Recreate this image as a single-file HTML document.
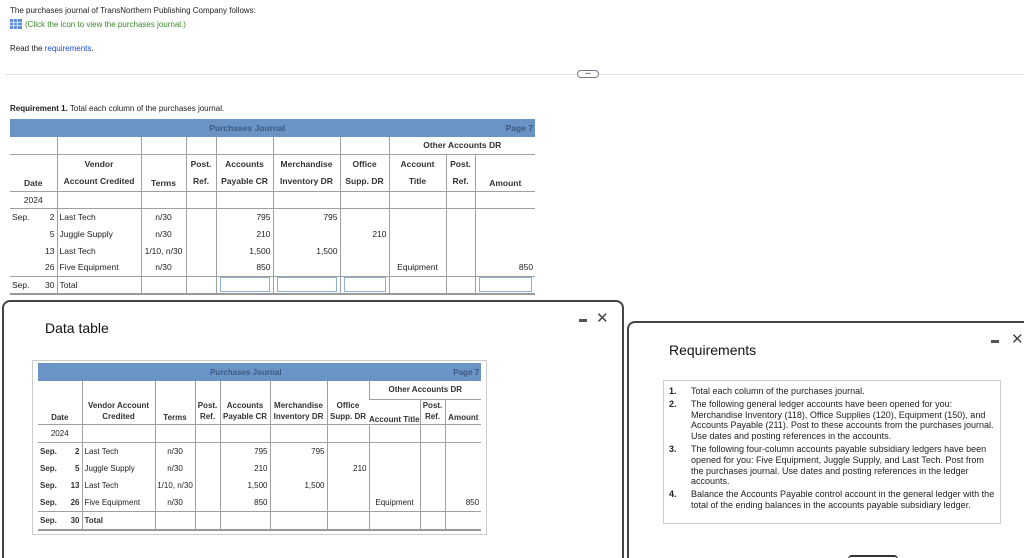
<!DOCTYPE html>
<html style="overflow:hidden;height:558px"><head><meta charset="utf-8"><style>
body{margin:0;width:1024px;height:558px;overflow:hidden;background:#fff;font-family:"Liberation Sans",Arial,sans-serif;color:#222;position:relative}
.a{position:absolute}
table{border-collapse:collapse;table-layout:fixed;font-size:8.5px}
td{padding:0 2px;white-space:nowrap;overflow:hidden;border-left:1px solid #a0a0a0;vertical-align:middle}
td:first-child{border-left:none}
.hd td{background:#6a93c6;color:#3d5a80;font-weight:bold;border:none}
.b{font-weight:bold;color:#333}
.c{text-align:center}.r{text-align:right}
.bt td{border-top:1px solid #a0a0a0}
.inp{display:block;height:13px;border:1px solid #8fb0d0;background:#fff;margin:0 1px}
.modal{position:absolute;border:2px solid #444;border-bottom:none;border-radius:8px 8px 0 0;background:#fff}
</style></head><body>
<div class="a" style="left:10px;top:6px;font-size:8px">The purchases journal of TransNorthern Publishing Company follows:</div>
<div class="a" style="left:10px;top:19px;font-size:8px;color:#3a8a2a"><span style="display:inline-block;width:12px;height:10px;background:#5b8ed6;vertical-align:-2px;margin-right:3px;background-image:linear-gradient(90deg,transparent 3px,#cfe0f5 3px,#cfe0f5 4px,transparent 4px,transparent 7px,#cfe0f5 7px,#cfe0f5 8px,transparent 8px),linear-gradient(transparent 3px,#cfe0f5 3px,#cfe0f5 4px,transparent 4px,transparent 6px,#cfe0f5 6px,#cfe0f5 7px,transparent 7px)"></span>(Click the icon to view the purchases journal.)</div>
<div class="a" style="left:10px;top:44px;font-size:8px">Read the <span style="color:#1a4fd6">requirements</span>.</div>
<div class="a" style="left:5px;top:74px;width:1019px;height:1px;background:#e2e2e2"></div>
<div class="a" style="left:577px;top:70px;width:20px;height:6px;border:1px solid #778;border-radius:4px;background:#fff;font-size:5px;line-height:6px;text-align:center;color:#556">▪▪▪</div>
<div class="a" style="left:10px;top:104px;font-size:8px"><b>Requirement 1.</b> Total each column of the purchases journal.</div>

<table class="a" style="left:10px;top:119px;width:525px;border-bottom:2px solid #999">
<colgroup><col style="width:47px"><col style="width:84px"><col style="width:45px"><col style="width:30px"><col style="width:57px"><col style="width:67px"><col style="width:49px"><col style="width:57px"><col style="width:29px"><col style="width:60px"></colgroup>
<tr class="hd" style="height:18px"><td colspan="5" class="r" style="padding-right:0">Purchases Jour</td><td colspan="5" style="padding-left:0"><span>nal</span><span style="float:right">Page 7</span></td></tr>
<tr style="height:17px"><td></td><td></td><td></td><td></td><td></td><td></td><td></td><td colspan="3" class="c b">Other Accounts DR</td></tr>
<tr class="bt" style="height:37px"><td class="c b" style="vertical-align:bottom;padding-bottom:3px">Date</td><td class="c b" style="line-height:17px">Vendor<br>Account Credited</td><td class="c b" style="vertical-align:bottom;padding-bottom:3px">Terms</td><td class="c b" style="line-height:17px">Post.<br>Ref.</td><td class="c b" style="line-height:17px">Accounts<br>Payable CR</td><td class="c b" style="line-height:17px">Merchandise<br>Inventory DR</td><td class="c b" style="line-height:17px">Office<br>Supp. DR</td><td class="c b" style="line-height:17px">Account<br>Title</td><td class="c b" style="line-height:17px">Post.<br>Ref.</td><td class="c b" style="vertical-align:bottom;padding-bottom:3px">Amount</td></tr>
<tr class="bt" style="height:17px"><td class="c">2024</td><td></td><td></td><td></td><td></td><td></td><td></td><td></td><td></td><td></td></tr>
<tr class="bt" style="height:17px"><td>Sep.<span style="float:right">2</span></td><td>Last Tech</td><td class="c">n/30</td><td></td><td class="r">795</td><td class="r">795</td><td></td><td></td><td></td><td></td></tr>
<tr style="height:17px"><td class="r">5</td><td>Juggle Supply</td><td class="c">n/30</td><td></td><td class="r">210</td><td></td><td class="r">210</td><td></td><td></td><td></td></tr>
<tr style="height:17px"><td class="r">13</td><td>Last Tech</td><td class="c">1/10, n/30</td><td></td><td class="r">1,500</td><td class="r">1,500</td><td></td><td></td><td></td><td></td></tr>
<tr style="height:17px"><td class="r">26</td><td>Five Equipment</td><td class="c">n/30</td><td></td><td class="r">850</td><td></td><td></td><td class="c">Equipment</td><td></td><td class="r">850</td></tr>
<tr class="bt" style="height:18px"><td>Sep.<span style="float:right">30</span></td><td>Total</td><td></td><td></td><td><span class="inp"></span></td><td><span class="inp"></span></td><td><span class="inp"></span></td><td></td><td></td><td><span class="inp"></span></td></tr>
</table>

<div class="modal" style="left:2px;top:300px;width:618px;height:258px"></div>
<div class="a" style="left:45px;top:320px;font-size:14px;color:#111">Data table</div>
<div class="a" style="left:579px;top:319px;width:8px;height:2.5px;background:#555"></div>
<div class="a" style="left:596px;top:309px;font-size:15px;color:#444">✕</div>
<div class="a" style="left:32px;top:360px;width:453px;height:173px;border:1px solid #ccc"></div>
<table class="a" style="left:38px;top:363px;width:443px;border-bottom:2px solid #999;font-size:8px">
<colgroup><col style="width:44px"><col style="width:73px"><col style="width:40px"><col style="width:25px"><col style="width:50px"><col style="width:57px"><col style="width:42px"><col style="width:51px"><col style="width:25px"><col style="width:36px"></colgroup>
<tr class="hd" style="height:18px"><td colspan="5" class="r" style="padding-right:0">Purchases Jour</td><td colspan="5" style="padding-left:0">nal<span style="float:right">Page 7</span></td></tr>
<tr style="height:18px"><td rowspan="2" class="c b" style="vertical-align:bottom;padding-bottom:2px">Date</td><td rowspan="2" class="c b" style="line-height:11px;vertical-align:bottom;padding-bottom:2px">Vendor Account<br>Credited</td><td rowspan="2" class="c b" style="vertical-align:bottom;padding-bottom:2px">Terms</td><td rowspan="2" class="c b" style="line-height:11px;vertical-align:bottom;padding-bottom:2px">Post.<br>Ref.</td><td rowspan="2" class="c b" style="line-height:11px;vertical-align:bottom;padding-bottom:2px">Accounts<br>Payable CR</td><td rowspan="2" class="c b" style="line-height:11px;vertical-align:bottom;padding-bottom:2px">Merchandise<br>Inventory DR</td><td rowspan="2" class="c b" style="line-height:11px;vertical-align:bottom;padding-bottom:2px">Office<br>Supp. DR</td><td colspan="3" class="c b" style="border-bottom:1px solid #a0a0a0">Other Accounts DR</td></tr>
<tr style="height:23px"><td class="c b" style="vertical-align:bottom;padding-bottom:2px;padding:0">Account Title</td><td class="c b" style="line-height:11px;vertical-align:bottom;padding-bottom:2px">Post.<br>Ref.</td><td class="c b" style="vertical-align:bottom;padding-bottom:2px;padding-left:0;padding-right:0">Amount</td></tr>
<tr class="bt" style="height:18px"><td class="c">2024</td><td></td><td></td><td></td><td></td><td></td><td></td><td></td><td></td><td></td></tr>
<tr class="bt" style="height:18px"><td class="b">Sep.<span style="float:right">2</span></td><td>Last Tech</td><td class="c">n/30</td><td></td><td class="r">795</td><td class="r">795</td><td></td><td></td><td></td><td></td></tr>
<tr style="height:17px"><td class="b">Sep.<span style="float:right">5</span></td><td>Juggle Supply</td><td class="c">n/30</td><td></td><td class="r">210</td><td></td><td class="r">210</td><td></td><td></td><td></td></tr>
<tr style="height:17px"><td class="b">Sep.<span style="float:right">13</span></td><td>Last Tech</td><td class="c" style="padding:0">1/10, n/30</td><td></td><td class="r">1,500</td><td class="r">1,500</td><td></td><td></td><td></td><td></td></tr>
<tr style="height:17px"><td class="b">Sep.<span style="float:right">26</span></td><td>Five Equipment</td><td class="c">n/30</td><td></td><td class="r">850</td><td></td><td></td><td class="c">Equipment</td><td></td><td class="r">850</td></tr>
<tr class="bt" style="height:19px"><td class="b">Sep.<span style="float:right">30</span></td><td class="b">Total</td><td></td><td></td><td></td><td></td><td></td><td></td><td></td><td></td></tr>
</table>

<div class="modal" style="left:627px;top:321px;width:420px;height:237px"></div>
<div class="a" style="left:669px;top:342px;font-size:14px;color:#111">Requirements</div>
<div class="a" style="left:991px;top:340px;width:8px;height:2.5px;background:#555"></div>
<div class="a" style="left:1011px;top:330px;font-size:15px;color:#444">✕</div>
<div class="a" style="left:663px;top:380px;width:336px;height:142px;border:1px solid #ccc"></div>
<div class="a" style="left:669px;top:386px;width:326px;font-size:9px;line-height:10.8px;color:#222">
<div style="display:flex;margin-bottom:2px"><b style="width:22px;flex:none">1.</b><div>Total each column of the purchases journal.</div></div>
<div style="display:flex;margin-bottom:2px"><b style="width:22px;flex:none">2.</b><div>The following general ledger accounts have been opened for you: Merchandise Inventory (118), Office Supplies (120), Equipment (150), and Accounts Payable (211). Post to these accounts from the purchases journal. Use dates and posting references in the accounts.</div></div>
<div style="display:flex;margin-bottom:2px"><b style="width:22px;flex:none">3.</b><div>The following four-column accounts payable subsidiary ledgers have been opened for you: Five Equipment, Juggle Supply, and Last Tech. Post from the purchases journal. Use dates and posting references in the ledger accounts.</div></div>
<div style="display:flex"><b style="width:22px;flex:none">4.</b><div>Balance the Accounts Payable control account in the general ledger with the total of the ending balances in the accounts payable subsidiary ledger.</div></div>
</div>
<div class="a" style="left:848px;top:555px;width:50px;height:4px;border-top:2px solid #333;border-radius:4px 4px 0 0"></div>
</body></html>
